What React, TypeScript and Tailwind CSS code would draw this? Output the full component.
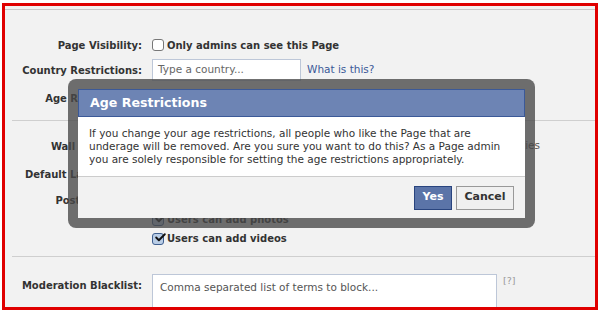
import { Check } from "lucide-react";

const LABEL =
  "w-[147px] shrink-0 pr-[10px] text-right text-[10px] font-bold text-[#333] whitespace-nowrap";

function Box({ checked = false }: { checked?: boolean }) {
  return (
    <span
      className={`relative mr-[3px] inline-flex h-[12px] w-[12px] shrink-0 items-center justify-center rounded-[3px] border ${
        checked ? "border-[#3f5f8f] bg-[#b9cde6]" : "border-[#777] bg-white"
      }`}
    >
      {checked && (
        <Check className="absolute -top-[3px] left-[1px] h-[13px] w-[13px] text-[#111]" strokeWidth={3.5} />
      )}
    </span>
  );
}

function CheckRow({ label, checked }: { label: string; checked?: boolean }) {
  return (
    <div className="flex h-[19px] items-center text-[10px] font-bold text-[#333]">
      <Box checked={checked} />
      {label}
    </div>
  );
}

function Divider() {
  return <div className="ml-[7px] h-px bg-[#cfcfcf]" />;
}

export default function App() {
  return (
    <div className="h-[312px] w-[601px] bg-white pl-[2px] pt-[3px] font-['DejaVu_Sans',sans-serif]">
      <div className="relative h-[307px] w-[596px] overflow-hidden border-[3px] border-[#e00000] bg-[#f2f2f2]">
        <div className="mt-[3px] h-px bg-[#c9c9c9]" />

        {/* first section */}
        <div className="mt-[24px] flex h-[22px] items-center">
          <div className={LABEL}>Page Visibility:</div>
          <CheckRow label="Only admins can see this Page" />
        </div>
        <div className="mt-[3px] flex h-[22px] items-center">
          <div className={LABEL}>Country Restrictions:</div>
          <div className="flex h-[22px] w-[149px] items-center border border-[#bdc7d8] bg-white pl-[5px] text-[10.5px] text-[#666]">
            Type a country...
          </div>
          <a className="ml-[6px] text-[10.5px] text-[#3b5998]">What is this?</a>
        </div>
        <div className="mt-[6px] flex h-[22px] items-center">
          <div className={LABEL}>Age Restrictions:</div>
          <div className="text-[10px] text-[#333]">Anyone (13+)</div>
        </div>

        <div className="mt-[11px]">
          <Divider />
        </div>

        {/* second section */}
        <div className="mt-[14px] flex h-[22px] items-center">
          <div className={LABEL}>Wall Tab Shows:</div>
          <div className="w-[388px] text-right text-[10.5px] text-[#555]">
            Only Posts by Page, All Posts, Recent Activities
          </div>
        </div>
        <div className="mt-[6px] flex h-[22px] items-center">
          <div className={LABEL}>Default Landing Tab:</div>
          <div className="text-[10px] text-[#333]">Wall</div>
        </div>
        <div className="mt-[6px] flex">
          <div className={`${LABEL} leading-[19px]`}>Posting Ability:</div>
          <div>
            <CheckRow label="Users can write or post content on the wall" checked />
            <CheckRow label="Users can add photos" checked />
            <CheckRow label="Users can add videos" checked />
          </div>
        </div>

        <div className="mt-[8px]">
          <Divider />
        </div>

        {/* moderation */}
        <div className="mt-[17px] flex items-start">
          <div className={`${LABEL} pt-[4px]`}>Moderation Blacklist:</div>
          <div className="h-[50px] w-[345px] border border-[#bdc7d8] bg-white px-[7px] pt-[5px] text-[10.5px] text-[#555]">
            Comma separated list of terms to block...
          </div>
          <span className="ml-[6px] text-[9.5px] text-[#999]">[?]</span>
        </div>

        {/* dialog */}
        <div className="absolute left-[63px] top-[73px] h-[149px] w-[467px] rounded-[8px] bg-[rgba(72,72,72,0.78)] p-[10px]">
          <div className="flex h-full flex-col">
            <div className="flex h-[28px] items-center border border-[#3b5998] bg-[#6d84b4] pl-[11px] text-[12.6px] font-bold text-white">
              Age Restrictions
            </div>
            <div className="h-[59px] bg-white px-[11px] pt-[10px] text-[10.5px] leading-[13px] text-[#333]">
              If you change your age restrictions, all people who like the Page that are underage will be
              removed. Are you sure you want to do this? As a Page admin you are solely responsible for
              setting the age restrictions appropriately.
            </div>
            <div className="flex flex-1 items-center justify-end gap-[4px] border-t border-[#ccc] bg-[#f2f2f2] pr-[11px]">
              <button className="h-[24px] w-[38px] border border-[#29447e] bg-[#5b74a8] text-[11px] font-bold text-white">
                Yes
              </button>
              <button className="h-[24px] w-[58px] border border-[#999] bg-[#f0f0f0] text-[11px] font-bold text-[#333]">
                Cancel
              </button>
            </div>
          </div>
        </div>
      </div>
    </div>
  );
}
